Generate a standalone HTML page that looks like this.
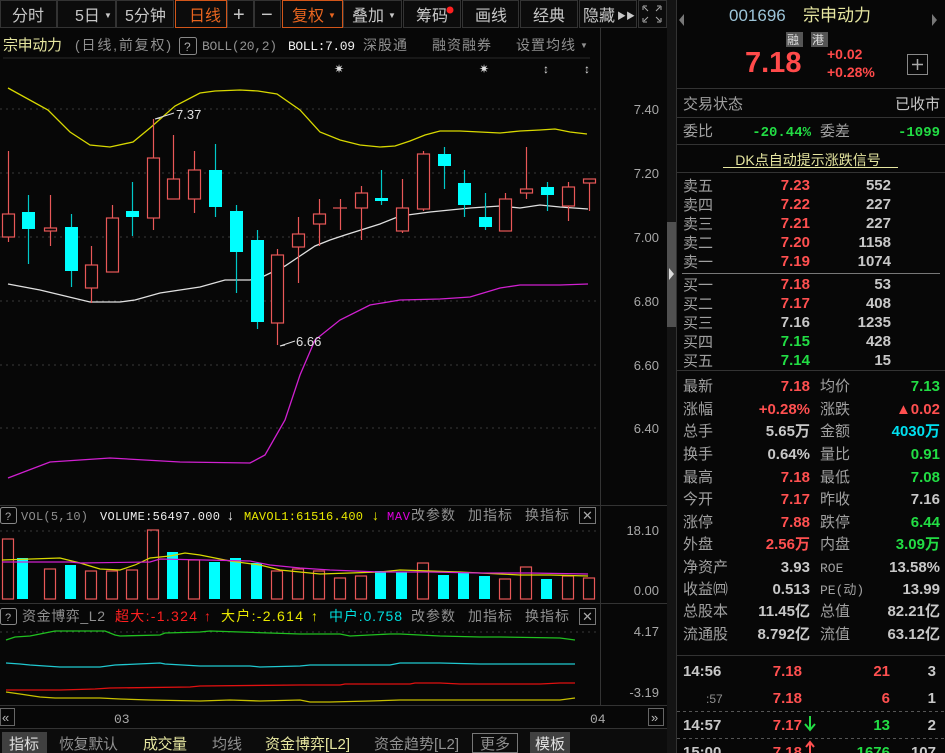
<!DOCTYPE html>
<html><head><meta charset="utf-8"><style>
html,body{margin:0;padding:0;background:#070707;}
body{width:945px;height:753px;overflow:hidden;position:relative;font-family:"Liberation Sans","Noto Sans CJK SC",sans-serif;}
svg{position:absolute;left:0;top:0;}
svg text{font-family:"Liberation Sans","Noto Sans CJK SC",sans-serif;}
.m{font-family:"Liberation Mono","Noto Sans CJK SC",monospace !important;}
</style></head><body>
<svg width="945" height="753" viewBox="0 0 945 753" xmlns="http://www.w3.org/2000/svg">
<rect width="945" height="753" fill="#070707"/>
<!-- toolbar -->
<g font-size="16" fill="#c8c8c8" stroke="none">
<rect x="0.5" y="0.5" width="56" height="27" fill="#0c0c0c" stroke="#333"/>
<rect x="57.5" y="0.5" width="58" height="27" fill="#0c0c0c" stroke="#333"/>
<rect x="116.5" y="0.5" width="57" height="27" fill="#0c0c0c" stroke="#333"/>
<rect x="175.5" y="0.5" width="51" height="27" fill="#0c0c0c" stroke="#d2561a"/>
<rect x="227.5" y="0.5" width="26" height="27" fill="#0c0c0c" stroke="#333"/>
<rect x="254.5" y="0.5" width="26" height="27" fill="#0c0c0c" stroke="#333"/>
<rect x="282.5" y="0.5" width="60" height="27" fill="#0c0c0c" stroke="#d2561a"/>
<rect x="343.5" y="0.5" width="58" height="27" fill="#0c0c0c" stroke="#333"/>
<rect x="403.5" y="0.5" width="57" height="27" fill="#0c0c0c" stroke="#333"/>
<rect x="462.5" y="0.5" width="56" height="27" fill="#0c0c0c" stroke="#333"/>
<rect x="520.5" y="0.5" width="57" height="27" fill="#0c0c0c" stroke="#333"/>
<rect x="579.5" y="0.5" width="57" height="27" fill="#0c0c0c" stroke="#333"/>
<rect x="638.5" y="0.5" width="28" height="27" fill="#0c0c0c" stroke="#333"/>
<text x="12" y="21">分时</text>
<text x="75" y="21">5日</text><text x="104" y="18" font-size="8">▼</text>
<text x="125" y="21">5分钟</text>
<text x="189" y="21" fill="#e8651f">日线</text>
<text x="233" y="21" font-size="20">+</text>
<text x="261" y="21" font-size="20">−</text>
<text x="292" y="21" fill="#e8651f">复权</text><text x="328" y="18" font-size="8" fill="#e8651f">▼</text>
<text x="352" y="21">叠加</text><text x="388" y="18" font-size="8">▼</text>
<text x="416" y="21">筹码</text><circle cx="450" cy="10" r="3.5" fill="#ff2020"/>
<text x="475" y="21">画线</text>
<text x="533" y="21">经典</text>
<text x="583" y="21">隐藏</text><text x="617" y="19" font-size="9">▶▶</text>
<path d="M643 6h4M643 6v4M661 6h-4M661 6v4M643 22h4M643 22v-4M661 22h-4M661 22v-4M644 7l4 4M660 7l-4 4M644 21l4-4M660 21l-4-4" stroke="#aaa" stroke-width="1" fill="none"/>
</g>
<!-- header line -->
<g font-size="14">
<text x="3" y="50" fill="#e6e6a0" font-size="15" textLength="59">宗申动力</text>
<text x="75" y="50" fill="#909090" textLength="96">(日线,前复权)</text>
<rect x="179.5" y="37.5" width="17" height="17" rx="2" fill="none" stroke="#888"/>
<text x="184" y="51" fill="#aaa" font-size="12">?</text>
<text x="202" y="50" fill="#909090" class="m" font-size="13" textLength="75">BOLL(20,2)</text>
<text x="288" y="50" fill="#eee" class="m" font-size="13" textLength="67">BOLL:7.09</text>
<text x="363" y="50" fill="#909090" textLength="44">深股通</text>
<text x="432" y="50" fill="#909090" textLength="59">融资融券</text>
<text x="516" y="50" fill="#909090" textLength="59">设置均线</text><text x="580" y="48" font-size="8" fill="#909090">▼</text>
</g>
<line x1="3" y1="58" x2="590" y2="58" stroke="#2a2a2a"/>
<g fill="#ddd" font-size="12"><text x="334" y="73">✷</text><text x="479" y="73">✷</text><text x="543" y="73">↕</text><text x="584" y="73">↕</text></g>
<!-- chart frame -->
<line x1="600.5" y1="28" x2="600.5" y2="705" stroke="#333"/>
<line x1="0" y1="505.5" x2="667" y2="505.5" stroke="#333"/>
<line x1="0" y1="603.5" x2="667" y2="603.5" stroke="#333"/>
<line x1="0" y1="705.5" x2="667" y2="705.5" stroke="#333"/>
<line x1="0" y1="728.5" x2="667" y2="728.5" stroke="#333"/>
<g stroke="#3a3a3a" stroke-dasharray="2,4">
<line x1="0" y1="109" x2="600" y2="109"/><line x1="0" y1="173" x2="600" y2="173"/><line x1="0" y1="237" x2="600" y2="237"/><line x1="0" y1="301" x2="600" y2="301"/><line x1="0" y1="365" x2="600" y2="365"/><line x1="0" y1="428" x2="600" y2="428"/>
<line x1="0" y1="531" x2="600" y2="531"/><line x1="0" y1="632" x2="600" y2="632"/>
</g>
<g fill="#a8a8a8" font-size="13" class="m" text-anchor="end">
<text x="659" y="114">7.40</text><text x="659" y="178">7.20</text><text x="659" y="242">7.00</text><text x="659" y="306">6.80</text><text x="659" y="370">6.60</text><text x="659" y="433">6.40</text>
<text x="659" y="535">18.10</text><text x="659" y="595">0.00</text>
<text x="659" y="636">4.17</text><text x="659" y="697">-3.19</text>
</g>
<!-- BOLL lines -->
<polyline fill="none" stroke="#d8d800" stroke-width="1.3" points="8,88 48,110 70,132 90,145 110,147 133,142 150,128 175,106 200,93 215,91 240,90 258,91 277,94 300,110 320,132 340,140 360,145 380,147 395,146 410,141 425,135 440,131 460,131 480,132 500,133 520,131 540,130 555,129 570,132 587,134"/>
<polyline fill="none" stroke="#e0e0e0" stroke-width="1.3" points="8,284 40,290 65,296 90,302 120,302 135,300 160,293 200,287 225,280 250,280 260,278 285,266 300,256 315,246 330,240 345,235 380,224 400,216 430,212 470,208 500,206 520,208 540,205 560,207 588,209"/>
<polyline fill="none" stroke="#d020d0" stroke-width="1.3" points="8,478 50,462 110,458 180,462 250,463 265,455 285,420 300,375 315,340 340,320 370,305 400,300 440,299 470,297 500,288 520,285 560,285 588,284"/>
<!-- candles -->
<g stroke="#e85858" stroke-width="1.2" fill="#070707">
<line x1="8.5" y1="151" x2="8.5" y2="242"/><rect x="2.5" y="214" width="12" height="23"/>
<line x1="50.5" y1="195" x2="50.5" y2="246"/><rect x="44.5" y="228" width="12" height="3"/>
<line x1="91.5" y1="246" x2="91.5" y2="303"/><rect x="85.5" y="265" width="12" height="23"/>
<line x1="112.5" y1="205" x2="112.5" y2="272"/><rect x="106.5" y="218" width="12" height="54"/>
<line x1="153.5" y1="119" x2="153.5" y2="230"/><rect x="147.5" y="158" width="12" height="60"/>
<line x1="173.5" y1="135" x2="173.5" y2="199"/><rect x="167.5" y="179" width="12" height="20"/>
<line x1="194.5" y1="151" x2="194.5" y2="213"/><rect x="188.5" y="170" width="12" height="29"/>
<line x1="277.5" y1="249" x2="277.5" y2="345"/><rect x="271.5" y="255" width="12" height="68"/>
<line x1="298.5" y1="217" x2="298.5" y2="283"/><rect x="292.5" y="234" width="12" height="13"/>
<line x1="319.5" y1="199" x2="319.5" y2="246"/><rect x="313.5" y="214" width="12" height="10"/>
<line x1="340.5" y1="199" x2="340.5" y2="230"/><line x1="333" y1="208" x2="347" y2="208"/>
<line x1="361.5" y1="186" x2="361.5" y2="240"/><rect x="355.5" y="193" width="12" height="15"/>
<line x1="402.5" y1="179" x2="402.5" y2="233"/><rect x="396.5" y="208" width="12" height="23"/>
<line x1="423.5" y1="151" x2="423.5" y2="211"/><rect x="417.5" y="154" width="12" height="55"/>
<line x1="505.5" y1="193" x2="505.5" y2="231"/><rect x="499.5" y="199" width="12" height="32"/>
<line x1="526.5" y1="147" x2="526.5" y2="199"/><rect x="520.5" y="189" width="12" height="4"/>
<line x1="568.5" y1="182" x2="568.5" y2="221"/><rect x="562.5" y="187" width="12" height="19"/>
<line x1="589.5" y1="179" x2="589.5" y2="211"/><rect x="583.5" y="179" width="12" height="4"/>
</g>
<g stroke="#00c8c8" stroke-width="1.2" fill="#00ffff">
<line x1="28.5" y1="195" x2="28.5" y2="264"/><rect x="22" y="212" width="13" height="17" stroke="none"/>
<line x1="71.5" y1="214" x2="71.5" y2="287"/><rect x="65" y="227" width="13" height="44" stroke="none"/>
<line x1="132.5" y1="182" x2="132.5" y2="236"/><rect x="126" y="211" width="13" height="6" stroke="none"/>
<line x1="215.5" y1="144" x2="215.5" y2="217"/><rect x="209" y="170" width="13" height="37" stroke="none"/>
<line x1="236.5" y1="205" x2="236.5" y2="293"/><rect x="230" y="211" width="13" height="41" stroke="none"/>
<line x1="257.5" y1="230" x2="257.5" y2="329"/><rect x="251" y="240" width="13" height="82" stroke="none"/>
<line x1="381.5" y1="170" x2="381.5" y2="205"/><rect x="375" y="198" width="13" height="3" stroke="none"/>
<line x1="444.5" y1="147" x2="444.5" y2="189"/><rect x="438" y="154" width="13" height="12" stroke="none"/>
<line x1="464.5" y1="170" x2="464.5" y2="217"/><rect x="458" y="183" width="13" height="22" stroke="none"/>
<line x1="485.5" y1="193" x2="485.5" y2="230"/><rect x="479" y="217" width="13" height="10" stroke="none"/>
<line x1="547.5" y1="182" x2="547.5" y2="211"/><rect x="541" y="187" width="13" height="8" stroke="none"/>
</g>
<g fill="#e0e0e0" font-size="13" class="m"><text x="176" y="119">7.37</text><text x="296" y="346">6.66</text></g>
<g stroke="#e0e0e0" fill="none"><path d="M155 119 L174 113 M155 119 l5 -1 M280 346 L295 341 M280 346 l5 -1"/></g>
<!-- volume panel -->
<g font-size="14">
<rect x="0.5" y="507.5" width="16" height="16" rx="2" fill="none" stroke="#888"/><text x="5" y="520" fill="#aaa" font-size="11">?</text>
<text x="21" y="520" fill="#909090" class="m" font-size="12" textLength="67">VOL(5,10)</text>
<text x="100" y="520" fill="#eee" class="m" font-size="12" textLength="120">VOLUME:56497.000</text><text x="227" y="520" fill="#eee">↓</text>
<text x="244" y="520" fill="#e8e800" class="m" font-size="12" textLength="119">MAVOL1:61516.400</text><text x="372" y="520" fill="#e8e800">↓</text>
<text x="387" y="520" fill="#e000e0" class="m" font-size="12" textLength="23">MAV</text>
<text x="411" y="520" fill="#909090" textLength="44">改参数</text><text x="468" y="520" fill="#909090" textLength="44">加指标</text><text x="525" y="520" fill="#909090" textLength="44">换指标</text>
<rect x="579.5" y="507.5" width="16" height="16" fill="none" stroke="#777"/><text x="582" y="520" fill="#aaa" font-size="13">✕</text>
</g>
<g stroke="#e85858" stroke-width="1.2" fill="none">
<rect x="2.5" y="539" width="11" height="60"/><rect x="44.5" y="569" width="11" height="30"/><rect x="85.5" y="571" width="11" height="28"/><rect x="106.5" y="571" width="11" height="28"/><rect x="126.5" y="570" width="11" height="29"/><rect x="147.5" y="530" width="11" height="69"/><rect x="188.5" y="560" width="11" height="39"/><rect x="271.5" y="571" width="11" height="28"/><rect x="292.5" y="569" width="11" height="30"/><rect x="313.5" y="571" width="11" height="28"/><rect x="334.5" y="578" width="11" height="21"/><rect x="355.5" y="576" width="11" height="23"/><rect x="417.5" y="563" width="11" height="36"/><rect x="499.5" y="579" width="11" height="20"/><rect x="520.5" y="567" width="11" height="32"/><rect x="562.5" y="576" width="11" height="23"/><rect x="583.5" y="578" width="11" height="21"/>
</g>
<g fill="#00ffff">
<rect x="17" y="558" width="11" height="41"/><rect x="65" y="565" width="11" height="34"/><rect x="167" y="552" width="11" height="47"/><rect x="209" y="562" width="11" height="37"/><rect x="230" y="558" width="11" height="41"/><rect x="251" y="563" width="11" height="36"/><rect x="375" y="571" width="11" height="28"/><rect x="396" y="572" width="11" height="27"/><rect x="438" y="575" width="11" height="24"/><rect x="458" y="572" width="11" height="27"/><rect x="479" y="576" width="11" height="23"/><rect x="541" y="579" width="11" height="20"/>
</g>
<polyline fill="none" stroke="#d8d800" stroke-width="1.2" points="2,560 60,558 80,563 100,569 120,570 135,565 150,558 170,556 185,553 200,555 230,561 260,565 280,570 320,574 380,572 400,570 430,571 460,572 500,574 520,575 550,575 588,576"/>
<polyline fill="none" stroke="#d020d0" stroke-width="1.2" points="2,562 70,562 80,563 150,562 160,559 250,561 270,565 300,568 330,570 380,572 430,572 480,573 530,573 588,574"/>
<!-- capital panel -->
<g font-size="14">
<rect x="0.5" y="608.5" width="16" height="16" rx="2" fill="none" stroke="#888"/><text x="5" y="621" fill="#aaa" font-size="11">?</text>
<text x="22" y="621" fill="#909090" textLength="83">资金博弈_L2</text>
<text x="115" y="621" fill="#ff2020" textLength="82">超大:-1.324</text><text x="204" y="621" fill="#ff2020">↑</text>
<text x="221" y="621" fill="#e8e800" textLength="82">大户:-2.614</text><text x="311" y="621" fill="#e8e800">↑</text>
<text x="329" y="621" fill="#00e0e0" textLength="73">中户:0.758</text>
<text x="411" y="621" fill="#909090" textLength="44">改参数</text><text x="468" y="621" fill="#909090" textLength="44">加指标</text><text x="525" y="621" fill="#909090" textLength="44">换指标</text>
<rect x="579.5" y="608.5" width="16" height="16" fill="none" stroke="#777"/><text x="582" y="621" fill="#aaa" font-size="13">✕</text>
</g>
<polyline fill="none" stroke="#20c020" stroke-width="1.3" points="6,640 15,637 30,636 50,632 55,631 105,631 115,635 120,636 160,635 165,633 200,632 210,631 240,632 300,634 340,634 350,636 390,634 400,634 440,636 480,637 500,637 560,638 575,640"/>
<polyline fill="none" stroke="#20c8d0" stroke-width="1.3" points="6,663 20,664 30,665 60,667 100,667 115,665 160,663 165,664 200,666 250,666 260,667 300,666 310,665 390,665 400,663 440,663 480,664 575,664"/>
<polyline fill="none" stroke="#e01010" stroke-width="1.3" points="6,690 60,690 95,689 110,688 190,687 200,686 300,685 340,685 345,684 410,684 415,683 440,683 460,684 540,684 560,683 575,683"/>
<polyline fill="none" stroke="#c8c000" stroke-width="1.3" points="6,692 20,694 40,697 55,698 100,698 120,699 150,700 200,701 230,700 260,701 300,700 310,702 330,702 370,701 400,700 470,700 560,700 575,698"/>
<!-- date axis -->
<rect x="0.5" y="708.5" width="14" height="17" fill="none" stroke="#666"/><text x="2" y="722" fill="#bbb" font-size="13">«</text>
<text x="114" y="723" fill="#a8a8a8" font-size="13" class="m">03</text>
<text x="590" y="723" fill="#a8a8a8" font-size="13" class="m">04</text>
<rect x="648.5" y="708.5" width="15" height="17" fill="none" stroke="#666"/><text x="651" y="722" fill="#bbb" font-size="13">»</text>
<!-- bottom tabs -->
<rect x="0" y="729" width="667" height="24" fill="#0c0c0c"/>
<g font-size="15">
<rect x="2" y="732" width="45" height="21" fill="#404040"/><text x="9" y="749" fill="#e0e0e0">指标</text>
<text x="59" y="749" fill="#909090" textLength="59">恢复默认</text>
<text x="143" y="749" fill="#e6e6a0" textLength="44">成交量</text>
<text x="212" y="749" fill="#909090">均线</text>
<text x="265" y="749" fill="#e6e6a0" textLength="85">资金博弈[L2]</text>
<text x="374" y="749" fill="#909090" textLength="85">资金趋势[L2]</text>
<rect x="472.5" y="733.5" width="45" height="19" fill="none" stroke="#777"/><text x="480" y="749" fill="#909090">更多</text>
<rect x="530" y="732" width="40" height="21" fill="#404040"/><text x="535" y="749" fill="#e0e0e0">模板</text>
</g>
<!-- divider -->
<rect x="667" y="0" width="10" height="753" fill="#141414"/>
<rect x="667" y="222" width="9" height="105" fill="#505050"/>
<path d="M669 268 l5 6 -5 6z" fill="#ddd"/>
<line x1="676.5" y1="0" x2="676.5" y2="753" stroke="#333"/>
<!-- right panel -->
<g font-size="16">
<path d="M684 14 l-5 6 5 6z" fill="#777"/><path d="M932 14 l5 6 -5 6z" fill="#777"/>
<text x="729" y="21" fill="#9cc4d8" font-size="17">001696</text><text x="803" y="21" fill="#e6e6a0" font-size="17">宗申动力</text>
<rect x="786" y="32" width="17" height="15" fill="#555"/><text x="787" y="44" fill="#ddd" font-size="12">融</text>
<rect x="811" y="32" width="17" height="15" fill="#555"/><text x="812" y="44" fill="#ddd" font-size="12">港</text>
<text x="745" y="72" fill="#ff4a4a" font-size="29" font-weight="bold">7.18</text>
<text x="827" y="59" fill="#ff4a4a" font-size="14" font-weight="bold">+0.02</text>
<text x="827" y="77" fill="#ff4a4a" font-size="14" font-weight="bold">+0.28%</text>
<rect x="907.5" y="54.5" width="20" height="20" fill="none" stroke="#888"/><path d="M912 64.5h11M917.5 59v11" stroke="#aaa" stroke-width="1.5"/>
</g>
<g stroke="#333"><line x1="677" y1="88.5" x2="945" y2="88.5"/><line x1="677" y1="117.5" x2="945" y2="117.5"/><line x1="677" y1="144.5" x2="945" y2="144.5"/><line x1="677" y1="172.5" x2="945" y2="172.5"/><line x1="677" y1="370.5" x2="945" y2="370.5"/><line x1="677" y1="655.5" x2="945" y2="655.5"/></g>
<line x1="682" y1="273.5" x2="940" y2="273.5" stroke="#777"/>
<g font-size="15" fill="#a0a0a0">
<text x="683" y="109">交易状态</text><text x="940" y="109" text-anchor="end" fill="#c8c8c8">已收市</text>
<text x="683" y="136">委比</text><text x="811" y="136" text-anchor="end" fill="#22dd44" class="m" font-size="14" font-weight="bold">-20.44%</text>
<text x="820" y="136">委差</text><text x="940" y="136" text-anchor="end" fill="#22dd44" class="m" font-size="14" font-weight="bold">-1099</text>
<text x="808" y="165" text-anchor="middle" fill="#e6e6a0" font-size="14">DK点自动提示涨跌信号</text>
</g>
<line x1="723" y1="167.5" x2="898" y2="167.5" stroke="#e6e6a0"/>
<g font-size="15" fill="#a0a0a0">
<text x="683" y="191">卖五</text><text x="683" y="210">卖四</text><text x="683" y="229">卖三</text><text x="683" y="248">卖二</text><text x="683" y="267">卖一</text>
<text x="683" y="290">买一</text><text x="683" y="309">买二</text><text x="683" y="328">买三</text><text x="683" y="347">买四</text><text x="683" y="366">买五</text>
</g>
<g font-size="15" font-weight="bold" text-anchor="end">
<g fill="#ff5050"><text x="810" y="190">7.23</text><text x="810" y="209">7.22</text><text x="810" y="228">7.21</text><text x="810" y="247">7.20</text><text x="810" y="266">7.19</text><text x="810" y="289">7.18</text><text x="810" y="308">7.17</text></g>
<text x="810" y="327" fill="#c8c8c8">7.16</text>
<g fill="#22dd44"><text x="810" y="346">7.15</text><text x="810" y="365">7.14</text></g>
<g fill="#c8c8c8"><text x="891" y="190">552</text><text x="891" y="209">227</text><text x="891" y="228">227</text><text x="891" y="247">1158</text><text x="891" y="266">1074</text><text x="891" y="289">53</text><text x="891" y="308">408</text><text x="891" y="327">1235</text><text x="891" y="346">428</text><text x="891" y="365">15</text></g>
</g>
<g font-size="15" fill="#a0a0a0">
<text x="683" y="391">最新</text><text x="820" y="391">均价</text>
<text x="683" y="414">涨幅</text><text x="820" y="414">涨跌</text>
<text x="683" y="436">总手</text><text x="820" y="436">金额</text>
<text x="683" y="459">换手</text><text x="820" y="459">量比</text>
<text x="683" y="482">最高</text><text x="820" y="482">最低</text>
<text x="683" y="504">今开</text><text x="820" y="504">昨收</text>
<text x="683" y="527">涨停</text><text x="820" y="527">跌停</text>
<text x="683" y="549">外盘</text><text x="820" y="549">内盘</text>
<text x="683" y="572">净资产</text><text x="820" y="572" class="m" font-size="13">ROE</text>
<text x="683" y="594">收益㈣</text><text x="820" y="594" class="m" font-size="13">PE(动)</text>
<text x="683" y="616">总股本</text><text x="820" y="616">总值</text>
<text x="683" y="639">流通股</text><text x="820" y="639">流值</text>
</g>
<g font-size="15" font-weight="bold" text-anchor="end">
<text x="810" y="391" fill="#ff5050">7.18</text><text x="940" y="391" fill="#22dd44">7.13</text>
<text x="810" y="414" fill="#ff5050">+0.28%</text><text x="940" y="414" fill="#ff5050">▲0.02</text>
<text x="810" y="436" fill="#c8c8c8">5.65万</text><text x="940" y="436" fill="#00e0f0">4030万</text>
<text x="810" y="459" fill="#c8c8c8">0.64%</text><text x="940" y="459" fill="#22dd44">0.91</text>
<text x="810" y="482" fill="#ff5050">7.18</text><text x="940" y="482" fill="#22dd44">7.08</text>
<text x="810" y="504" fill="#ff5050">7.17</text><text x="940" y="504" fill="#c8c8c8">7.16</text>
<text x="810" y="527" fill="#ff5050">7.88</text><text x="940" y="527" fill="#22dd44">6.44</text>
<text x="810" y="549" fill="#ff5050">2.56万</text><text x="940" y="549" fill="#22dd44">3.09万</text>
<text x="810" y="572" fill="#c8c8c8">3.93</text><text x="940" y="572" fill="#c8c8c8">13.58%</text>
<text x="810" y="594" fill="#c8c8c8">0.513</text><text x="940" y="594" fill="#c8c8c8">13.99</text>
<text x="810" y="616" fill="#c8c8c8">11.45亿</text><text x="940" y="616" fill="#c8c8c8">82.21亿</text>
<text x="810" y="639" fill="#c8c8c8">8.792亿</text><text x="940" y="639" fill="#c8c8c8">63.12亿</text>
</g>
<g font-size="15" font-weight="bold">
<text x="683" y="676" fill="#c8c8c8">14:56</text><text x="802" y="676" fill="#ff5050" text-anchor="end">7.18</text><text x="890" y="676" fill="#ff5050" text-anchor="end">21</text><text x="936" y="676" fill="#c8c8c8" text-anchor="end">3</text>
<text x="706" y="703" fill="#909090" font-size="12" font-weight="normal">:57</text><text x="802" y="703" fill="#ff5050" text-anchor="end">7.18</text><text x="890" y="703" fill="#ff5050" text-anchor="end">6</text><text x="936" y="703" fill="#c8c8c8" text-anchor="end">1</text>
<text x="683" y="730" fill="#c8c8c8">14:57</text><text x="802" y="730" fill="#ff5050" text-anchor="end">7.17</text><text x="890" y="730" fill="#22dd44" text-anchor="end">13</text><text x="936" y="730" fill="#c8c8c8" text-anchor="end">2</text>
<text x="683" y="757" fill="#c8c8c8">15:00</text><text x="802" y="757" fill="#ff5050" text-anchor="end">7.18</text><text x="890" y="757" fill="#22dd44" text-anchor="end">1676</text><text x="936" y="757" fill="#c8c8c8" text-anchor="end">107</text>
</g>
<path d="M810 716v13M805 724l5 6 5-6" stroke="#22dd44" stroke-width="2" fill="none"/>
<path d="M810 753v-10M806 747l4-5 4 5" stroke="#ff5050" stroke-width="2" fill="none"/>
<g stroke="#555" stroke-dasharray="3,3"><line x1="677" y1="711.5" x2="945" y2="711.5"/><line x1="677" y1="738.5" x2="945" y2="738.5"/></g>
</svg>
</body></html>
